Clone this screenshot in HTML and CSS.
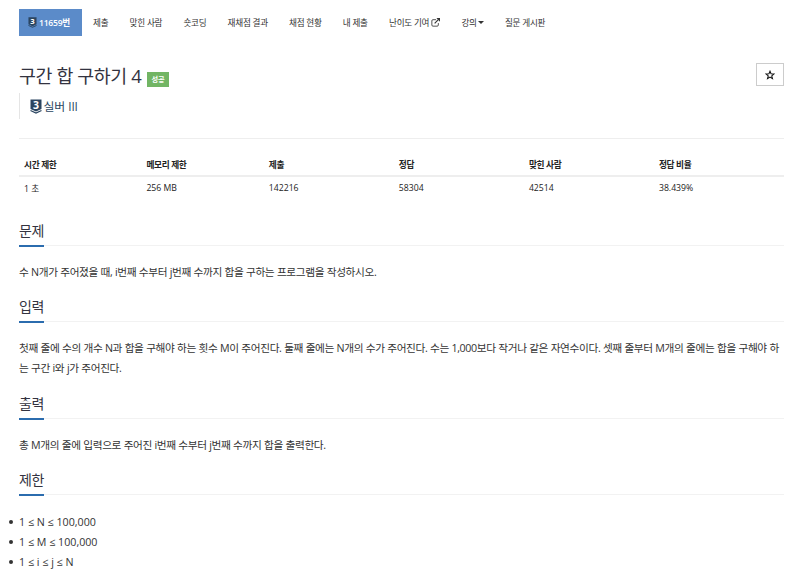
FILE: index.html
```html
<!DOCTYPE html>
<html lang="ko">

<head>
    <meta charset="UTF-8">
    <meta name="viewport" content="width=device-width, initial-scale=1.0">
    <title>11659번: 구간 합 구하기 4</title>
    <link rel="stylesheet" href="styles.css">
</head>

<body>
    <div class="container">
        <ul class="problem-menu">
            <li class="active">
                <a>
                    <svg class="tier" viewBox="0 0 24 30">
                        <path d="M1 1h22v19l-11 5-11-5z" fill="#2b4560"/>
                        <path d="M1 23l11 5 11-5" fill="none" stroke="#2b4560" stroke-width="2.6"/>
                        <text x="12" y="19.5" text-anchor="middle">3</text>
                    </svg>
                    11659번
                </a>
            </li>
            <li><a>제출</a></li>
            <li><a>맞힌 사람</a></li>
            <li><a>숏코딩</a></li>
            <li><a>재채점 결과</a></li>
            <li><a>채점 현황</a></li>
            <li><a>내 제출</a></li>
            <li>
                <a>난이도 기여
                    <svg class="external" viewBox="0 0 16 16">
                        <path d="M9 3H3.5Q1.5 3 1.5 5v7.5q0 2 2 2H11q2 0 2-2V9" fill="none" stroke="#333" stroke-width="1.5"/>
                        <path d="M6.5 9.5L13 3" stroke="#333" stroke-width="2"/>
                        <path d="M9.5 0H16v6.5z" fill="#333"/>
                    </svg>
                </a>
            </li>
            <li><a>강의<span class="caret"></span></a></li>
            <li><a>질문 게시판</a></li>
        </ul>

        <div class="page-header">
            <div class="title-row">
                <h1>구간 합 구하기 4</h1>
                <span class="label">성공</span>
                <button class="favorite" type="button">
                    <svg viewBox="0 0 20 20">
                        <path d="M10 2.5l2.2 5.2 5.6.4-4.3 3.6 1.4 5.5-4.9-3-4.9 3 1.4-5.5-4.3-3.6 5.6-.4z" fill="none" stroke="#111" stroke-width="2.2"/>
                    </svg>
                </button>
            </div>
            <blockquote>
                <svg class="tier" viewBox="0 0 24 30">
                    <path d="M1 1h22v19l-11 5-11-5z" fill="#2b4560"/>
                    <path d="M1 23l11 5 11-5" fill="none" stroke="#2b4560" stroke-width="2.6"/>
                    <text x="12" y="19.5" text-anchor="middle">3</text>
                </svg>
                <span>실버 III</span>
            </blockquote>
        </div>

        <table class="problem-info">
            <thead>
                <tr>
                    <th>시간 제한</th>
                    <th>메모리 제한</th>
                    <th>제출</th>
                    <th>정답</th>
                    <th>맞힌 사람</th>
                    <th>정답 비율</th>
                </tr>
            </thead>
            <tbody>
                <tr>
                    <td>1 초</td>
                    <td>256 MB</td>
                    <td>142216</td>
                    <td>58304</td>
                    <td>42514</td>
                    <td>38.439%</td>
                </tr>
            </tbody>
        </table>

        <section>
            <div class="headline"><h2>문제</h2></div>
            <p>수 N개가 주어졌을 때, i번째 수부터 j번째 수까지 합을 구하는 프로그램을 작성하시오.</p>
        </section>

        <section>
            <div class="headline"><h2>입력</h2></div>
            <p>첫째 줄에 수의 개수 N과 합을 구해야 하는 횟수 M이 주어진다. 둘째 줄에는 N개의 수가 주어진다. 수는 1,000보다 작거나 같은 자연수이다. 셋째 줄부터 M개의 줄에는 합을 구해야 하는 구간 i와 j가 주어진다.</p>
        </section>

        <section>
            <div class="headline"><h2>출력</h2></div>
            <p>총 M개의 줄에 입력으로 주어진 i번째 수부터 j번째 수까지 합을 출력한다.</p>
        </section>

        <section>
            <div class="headline"><h2>제한</h2></div>
            <ul class="limits">
                <li>1 ≤ N ≤ 100,000</li>
                <li>1 ≤ M ≤ 100,000</li>
                <li>1 ≤ i ≤ j ≤ N</li>
            </ul>
        </section>
    </div>
</body>

</html>
```
FILE: styles.css
```css
* {
    box-sizing: border-box;
}

body {
    margin: 0;
    background-color: #fff;
    color: #333;
    font-family: "Open Sans", "Noto Sans CJK KR", sans-serif;
    font-size: 10.7px;
    overflow: hidden;
}

.container {
    width: 765px;
    margin-left: 19px;
    padding-top: 9px;
}

.problem-menu {
    display: flex;
    gap: 1px;
    height: 28px;
    margin: 0;
    padding: 0;
    list-style: none;
    font-size: 8.6px;
    letter-spacing: -0.25px;
}

.problem-menu a {
    display: flex;
    align-items: center;
    height: 27px;
    padding: 0 10.1px;
    white-space: nowrap;
}

.problem-menu .active a {
    width: 63px;
    padding-left: 9px;
    background-color: #5b8bc9;
    color: #fff;
    font-weight: 600;
}

.tier {
    flex: none;
    width: 9px;
    height: 11px;
    margin-right: 2px;
}

.tier text {
    fill: #fff;
    font-size: 21px;
    font-weight: 700;
    letter-spacing: 0;
}

.external {
    width: 9px;
    height: 9px;
    margin-left: 2px;
}

.caret {
    margin-left: 1px;
    border-top: 3px solid #333;
    border-left: 3px solid transparent;
    border-right: 3px solid transparent;
}

.page-header {
    height: 102px;
    padding-top: 26px;
    border-bottom: 1px solid #eee;
}

.title-row {
    display: flex;
    height: 24px;
}

h1 {
    width: 123px;
    margin: 0;
    color: #333340;
    font-size: 18.4px;
    font-weight: 400;
    letter-spacing: -0.4px;
    line-height: 25px;
    white-space: nowrap;
}

.label {
    width: 22px;
    height: 15px;
    margin: 9px 0 0 5px;
    background-color: #72b564;
    color: #fff;
    font-size: 7.2px;
    font-weight: 600;
    letter-spacing: -0.2px;
    line-height: 15px;
    text-align: center;
}

.favorite {
    display: flex;
    align-items: center;
    justify-content: center;
    width: 28px;
    height: 23px;
    margin-left: auto;
    padding: 0;
    border: 1px solid #ccc;
    background-color: #fff;
}

.favorite svg {
    width: 10px;
    height: 10px;
    margin-right: 1px;
}

blockquote {
    display: flex;
    align-items: center;
    height: 26px;
    margin: 6px 0 0;
    padding-left: 9.5px;
    border-left: 1px solid #e5e5e5;
    color: #2b4560;
    font-size: 11.9px;
    letter-spacing: -0.1px;
}

blockquote .tier {
    width: 12px;
    height: 15px;
}

blockquote span {
    margin-bottom: 2px;
}

.problem-info {
    width: 100%;
    margin-top: 14px;
    border-collapse: collapse;
    table-layout: fixed;
    font-size: 8.7px;
}

.problem-info th,
.problem-info td {
    width: 17%;
    height: 23px;
    padding: 0 5px;
    color: #222;
    text-align: left;
}

.problem-info th:nth-child(-n+2) {
    width: 16%;
}

.problem-info th {
    border-bottom: 2px solid #eee;
    letter-spacing: -0.35px;
}

section {
    margin-top: 12.2px;
}

.problem-info + section {
    margin-top: 19px;
}

.headline {
    height: 28px;
    border-bottom: 1px solid #f2f2f2;
}

.headline h2 {
    display: inline-block;
    height: 29px;
    margin: 0;
    border-bottom: 2px solid #2b6cae;
    color: #333340;
    font-size: 14px;
    font-weight: 400;
    letter-spacing: -0.4px;
    line-height: 26px;
}

p {
    margin: 16px 0 0;
    letter-spacing: -0.39px;
    word-spacing: 0.22px;
    line-height: 20.1px;
}

.limits {
    margin: 17px 0 0;
    padding: 0;
    line-height: 20.1px;
    list-style: none;
}

.limits li {
    display: flex;
    align-items: center;
    margin-left: -10px;
}

.limits li::before {
    content: "";
    width: 4px;
    height: 4px;
    margin-right: 6px;
    border-radius: 50%;
    background-color: #333;
}
```
